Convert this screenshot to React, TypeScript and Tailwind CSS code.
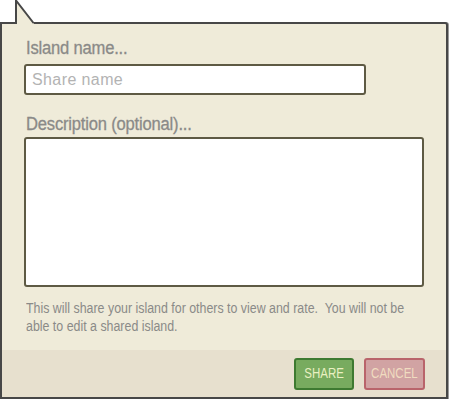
const sans = { fontFamily: '"Liberation Sans", Arial, sans-serif' };

function Narrow({ children, className = "" }: { children: React.ReactNode; className?: string }) {
  return <span className={"inline-block whitespace-nowrap " + className}>{children}</span>;
}

export default function App() {
  return (
    <div className="relative h-[399px] w-[450px] bg-white pt-[22px]" style={sans}>
      {/* speech bubble tail */}
      <svg className="absolute left-0 top-0" width="40" height="26" viewBox="0 0 40 26">
        <polygon points="16,0 16,24 34,24" fill="#efebd9" />
        <path d="M16 24 V0.5 L33.5 23" stroke="#474747" strokeWidth="2" fill="none" />
      </svg>
      <div className="flex h-[377px] w-[448px] flex-col rounded-tr-[3px] border-2 border-[#474747] bg-[#efebd9] shadow-[1px_0_0_#9a9a9a]">
        <div className="flex flex-1 flex-col pl-[22px] pr-[21px] pt-[13px]">
          <label className="h-[22px] pl-[2px] text-[18px] leading-[22px] text-[#8a8a88]">
            <Narrow className="origin-left scale-x-[0.92] tracking-[-0.2px] [-webkit-text-stroke:0.3px_#8a8a88]">Island name...</Narrow>
          </label>
          <div className="mt-[5px] flex h-[31px] w-[342px] items-center rounded-[3px] border-2 border-[#5e5a44] bg-white px-[6px]">
            <span className="text-[16px] tracking-[0.4px] text-[#b3b3b3]">Share name</span>
          </div>
          <label className="mt-[18px] h-[22px] pl-[2px] text-[18px] leading-[22px] text-[#8a8a88]">
            <Narrow className="origin-left scale-x-[0.92] tracking-[-0.2px] [-webkit-text-stroke:0.3px_#8a8a88]">Description (optional)...</Narrow>
          </label>
          <div className="mt-[2px] h-[150px] w-[400px] rounded-[3px] border-2 border-[#5e5a44] bg-white" />
          <p className="mt-[12px] flex flex-col pl-[2px] text-[14px] leading-[18px] text-[#8a8a88]">
            <Narrow className="origin-left scale-x-[0.885]">
              This will share your island for others to view and rate.&nbsp; You will not be
            </Narrow>
            <Narrow className="origin-left scale-x-[0.885]">able to edit a shared island.</Narrow>
          </p>
        </div>
        <div className="flex h-[47px] items-center justify-end gap-[10px] bg-[#e7e0ce] pr-[21px]">
          <button className="flex h-[32px] w-[60px] items-center justify-center rounded-[3px] border-2 border-[#3e7a31] bg-[#78ab5f] text-[14px] text-[#eaf0c2]">
            <Narrow className="scale-x-[0.82]">SHARE</Narrow>
          </button>
          <button className="flex h-[32px] w-[61px] items-center justify-center rounded-[3px] border-2 border-[#b9646b] bg-[#d1a3a3] text-[14px] text-[#f0dcc0]">
            <Narrow className="scale-x-[0.82]">CANCEL</Narrow>
          </button>
        </div>
      </div>
    </div>
  );
}
